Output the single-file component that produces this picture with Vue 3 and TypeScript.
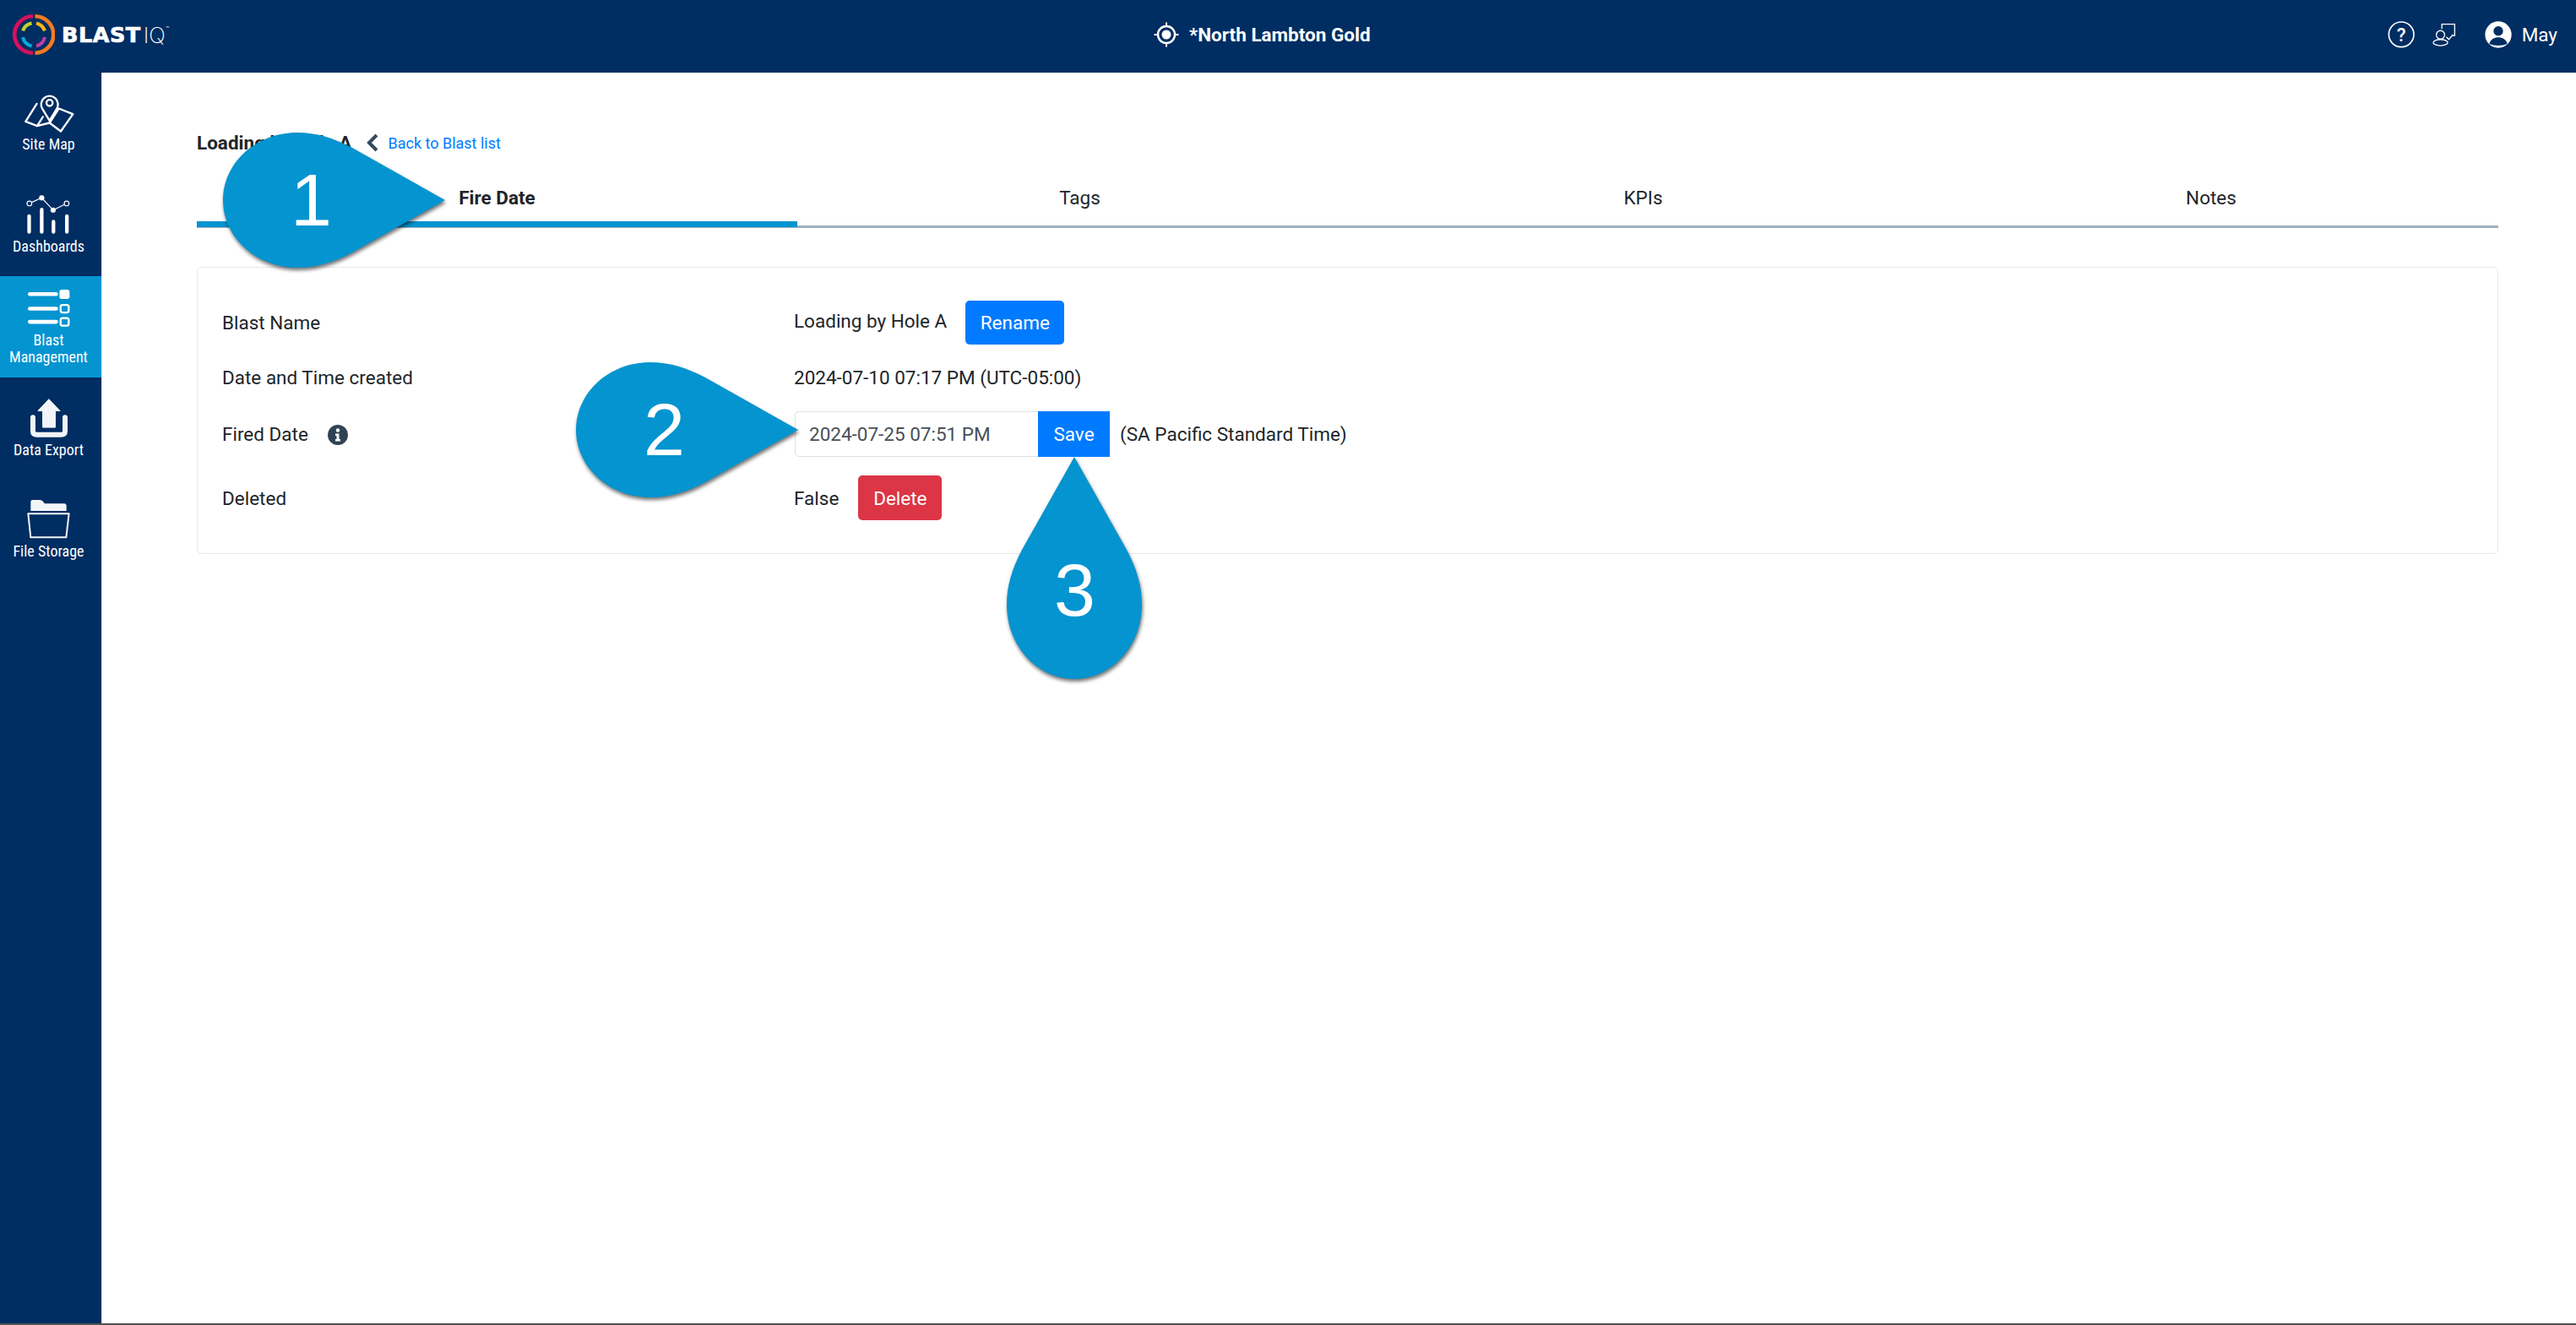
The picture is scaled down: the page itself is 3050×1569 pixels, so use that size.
<script setup lang="ts">
interface NavItem { id: string; lines: string[]; active?: boolean }
const nav: NavItem[] = [
  { id: 'map', lines: ['Site Map'] },
  { id: 'dash', lines: ['Dashboards'] },
  { id: 'blast', lines: ['Blast', 'Management'], active: true },
  { id: 'export', lines: ['Data Export'] },
  { id: 'files', lines: ['File Storage'] },
]
const tabs = ['Fire Date', 'Tags', 'KPIs', 'Notes']
const drops = [
  { n: 1, left: 264, top: 157, rot: 0 },
  { n: 2, left: 682, top: 429, rot: 0 },
  { n: 3, left: 1192, top: 541, rot: -90 },
]
function dropBox(d: { left: number; top: number; rot: number }) {
  return d.rot
    ? { left: d.left + 'px', top: d.top + 'px', width: '160px', height: '263px' }
    : { left: d.left + 'px', top: d.top + 'px', width: '263px', height: '160px' }
}
</script>

<template>
  <div class="page">
    <header class="top">
      <div class="logo">
        <svg class="logo-mark" viewBox="0 0 50 50" width="50" height="50" fill="none">
          <path d="M24 3.2A21.8 21.8 0 0 0 24 46.8" stroke="#d8105f" stroke-width="4.6" />
          <path d="M26.5 3.2A21.8 21.8 0 0 1 26.5 46.8" stroke="#f47b20" stroke-width="4.6" />
          <path d="M12 20.500A13.800 13.800 0 0 1 22.500 11.500" stroke="#c5d029" stroke-width="4" />
          <path d="M28 11.500A13.800 13.800 0 0 1 38 20.500" stroke="#fdb913" stroke-width="4" />
          <path d="M38 28A13.800 13.800 0 0 1 28 38.500" stroke="#b83fa8" stroke-width="4" />
          <path d="M22.500 38.500A13.800 13.800 0 0 1 12 28" stroke="#0fa6d8" stroke-width="4" />
        </svg>
        <span class="logo-blast">BLAST</span><span class="logo-iq">IQ</span><span class="logo-tm">™</span>
      </div>
      <div class="site">
        <svg viewBox="0 0 30 30" width="30" height="30" fill="none" stroke="#fff">
          <circle cx="15" cy="15" r="10" stroke-width="2.400" />
          <circle cx="15" cy="15" r="5.500" fill="#fff" stroke="none" />
          <path d="M15 0.500V5M15 25V29.500M0.500 15H5M25 15H29.500" stroke-width="2" />
        </svg>
        <span>*North Lambton Gold</span>
      </div>
      <div class="tools">
        <svg viewBox="130 70 110 110" width="37" height="37" fill="none" stroke="#fff">
          <circle cx="184" cy="123" r="44" stroke-width="5" />
          <text x="184" y="146" text-anchor="middle" class="q">?</text>
        </svg>
        <svg class="tool-chat" viewBox="290 70 100 100" width="33" height="33" fill="none" stroke="#fff" stroke-width="4">
          <path d="M330 98V81H376V122H366" />
          <circle cx="325" cy="119" r="15" />
          <ellipse cx="325" cy="147" rx="26" ry="11" />
          <path d="M346 127L355 136L370 118" />
        </svg>
        <svg class="tool-user" viewBox="484 72 96 96" width="32" height="32">
          <circle cx="532" cy="120" r="47" fill="#fff" />
          <circle cx="532" cy="107" r="17" fill="#002d62" />
          <path d="M500 153C504 137 518 130 532 130C546 130 560 137 564 153C545 161 519 161 500 153Z" fill="#002d62" />
        </svg>
        <span class="user-name">May</span>
      </div>
    </header>

    <div class="body">
      <aside class="side">
        <div v-for="item in nav" :key="item.id" class="nav" :class="{ on: item.active }">
          <svg v-if="item.id === 'map'" viewBox="80 330 180 140" width="60" height="47" fill="none" stroke="#fff" stroke-width="7" stroke-linejoin="round">
            <path d="M128 366L87 431L128 447L172 436L212 466L255 405L205 385L192 394" />
            <path d="M128 447L150 412M172 436L205 385" />
            <path d="M172 428L147 387A30 30 0 1 1 197 387Z" fill="#002d62" />
            <circle cx="172" cy="365" r="11" />
          </svg>
          <svg v-else-if="item.id === 'dash'" viewBox="90 690 165 145" width="55" height="48" fill="none" stroke="#fff">
            <path d="M103 768V825M148 745V825M190 788V825M238 768V825" stroke-width="13" stroke-linecap="round" />
            <path d="M112 719L148 703L189 747L229 727" stroke-width="3.500" />
            <circle cx="104" cy="723" r="8.500" stroke-width="3.500" />
            <circle cx="148" cy="703" r="9" fill="#fff" />
            <circle cx="189" cy="747" r="9" fill="#fff" />
            <circle cx="237" cy="723" r="8.500" stroke-width="3.500" />
          </svg>
          <svg v-else-if="item.id === 'blast'" viewBox="90 1022 160 143" width="53" height="48" fill="none" stroke="#fff">
            <path d="M103 1043H197M103 1095H197M103 1142H197" stroke-width="14" stroke-linecap="round" />
            <rect x="209" y="1027" width="36" height="33" rx="8" fill="#fff" stroke="none" />
            <rect x="213" y="1082" width="29" height="27" rx="7" stroke-width="7" />
            <rect x="213" y="1129" width="29" height="27" rx="7" stroke-width="7" />
          </svg>
          <svg v-else-if="item.id === 'export'" viewBox="100 92 145 145" width="48" height="48">
            <path d="M172 97L212 139H195V198H150V139H133Z" fill="#f2f5f8" stroke="#f2f5f8" stroke-width="3" stroke-linejoin="round" />
            <path d="M115 162V212Q115 224 130 224H215Q230 224 230 212V162" fill="none" stroke="#f2f5f8" stroke-width="18" stroke-linecap="round" />
          </svg>
          <svg v-else viewBox="92 455 160 145" width="53" height="48" fill="none">
            <path d="M108 497V465Q108 458 116 458H140Q150 458 158 471H228Q236 471 236 481V497Z" fill="#f2f5f8" />
            <path d="M99 507H245L235 592H108Z" stroke="#f2f5f8" stroke-width="6" stroke-linejoin="round" />
          </svg>
          <div class="nav-label">
            <span v-for="l in item.lines" :key="l">{{ l }}</span>
          </div>
        </div>
      </aside>

      <main class="main">
        <div class="crumb">
          <strong>Loading by Hole A</strong>
          <svg viewBox="0 0 14 22" width="14" height="22" fill="none" stroke="#34495e" stroke-width="4">
            <path d="M12 2L3 11L12 20" />
          </svg>
          <a href="#" class="back">Back to Blast list</a>
        </div>

        <nav class="tabs">
          <div v-for="(t, i) in tabs" :key="t" class="tab" :class="{ on: i === 0 }">{{ t }}</div>
        </nav>

        <section class="card">
          <div class="row r1">
            <div class="label">Blast Name</div>
            <div class="value">
              <span class="raised">Loading by Hole A</span>
              <button class="btn blue rename">Rename</button>
            </div>
          </div>
          <div class="row r2">
            <div class="label">Date and Time created</div>
            <div class="value">2024-07-10 07:17 PM (UTC-05:00)</div>
          </div>
          <div class="row r3">
            <div class="label">
              Fired Date
              <svg class="info" viewBox="0 0 24 24" width="24" height="24">
                <circle cx="12" cy="12" r="12" fill="#2f4354" />
                <circle cx="12" cy="6.500" r="2.200" fill="#fff" />
                <path d="M9 10.500H13.500V17H15V19.500H9V17H10.500V13H9Z" fill="#fff" />
              </svg>
            </div>
            <div class="value">
              <input class="date" value="2024-07-25 07:51 PM" readonly />
              <button class="btn blue save">Save</button>
              <span class="zone">(SA Pacific Standard Time)</span>
            </div>
          </div>
          <div class="row r4">
            <div class="label">Deleted</div>
            <div class="value">
              <span>False</span>
              <button class="btn red del">Delete</button>
            </div>
          </div>
        </section>
      </main>
    </div>
    <div class="edge"></div>

    <div v-for="d in drops" :key="d.n" class="drop" :style="dropBox(d)">
      <svg v-if="d.rot === 0" viewBox="0 0 263 160" width="263" height="160">
        <path class="drop-shape" d="M263 80L153 18C130 6 110 0 88 0C39 0 0 36 0 80C0 124 39 160 88 160C110 160 130 154 153 142Z" />
      </svg>
      <svg v-else viewBox="0 0 160 263" width="160" height="263">
        <path class="drop-shape" d="M80 0L18 110C6 133 0 153 0 175C0 224 36 263 80 263C124 263 160 224 160 175C160 153 154 133 142 110Z" />
      </svg>
      <span class="drop-n" :class="'n' + d.n">{{ d.n }}</span>
    </div>
  </div>
</template>

<style scoped>
.page {
  position: relative;
  width: 3050px;
  height: 1569px;
  overflow: hidden;
  background: #fff;
  font-family: Roboto, "Liberation Sans", sans-serif;
  font-size: 22.500px;
  color: #212529;
  display: flex;
  flex-direction: column;
}
.top {
  height: 86px;
  flex: none;
  box-sizing: border-box;
  padding-bottom: 4px;
  background: #002d62;
  color: #fff;
  display: flex;
  align-items: center;
}
.logo {
  width: 1366px;
  padding-left: 15px;
  box-sizing: border-box;
  display: flex;
  align-items: center;
  flex: none;
}
.logo-mark { flex: none; }
.logo-blast {
  margin-left: 8px;
  font-family: "DejaVu Sans", sans-serif;
  font-weight: 700;
  font-size: 25.500px;
  letter-spacing: 0.500px;
  -webkit-text-stroke: 0.7px #fff;
}
.logo-iq {
  margin-left: 3px;
  font-family: Inter, sans-serif;
  font-weight: 200;
  font-size: 26px;
}
.logo-tm {
  font-size: 7px;
  align-self: flex-start;
  margin-top: 14px;
}
.site {
  display: flex;
  align-items: center;
  gap: 12px;
  font-weight: 700;
}
.tools {
  margin-left: auto;
  display: flex;
  align-items: center;
  padding-right: 22px;
}
.q {
  font-family: Roboto, sans-serif;
  font-weight: 500;
  font-size: 66px;
  fill: #fff;
  stroke: none;
}
.tool-chat { margin-left: 16px; }
.tool-user { margin-left: 31px; }
.user-name { margin-left: 12px; }
.body {
  flex: 1;
  display: flex;
  min-height: 0;
}
.side {
  width: 120px;
  flex: none;
  background: #002d62;
  padding-top: 1px;
}
.nav {
  height: 120px;
  box-sizing: border-box;
  padding: 23px 5px 0 0;
  display: flex;
  flex-direction: column;
  align-items: center;
  color: #fff;
}
.nav:nth-child(n + 4) { padding-top: 24px; }
.nav.on {
  background: #0494d0;
  padding-top: 14px;
}
.nav-label {
  margin-top: 4px;
  display: flex;
  flex-direction: column;
  align-items: center;
  font-size: 18px;
  line-height: 20px;
  font-stretch: 85%;
  white-space: nowrap;
}
.main {
  flex: 1;
  padding: 0 92px 0 112px;
  min-width: 0;
  border-left: 1px solid #e3e6ea;
}
.crumb {
  display: flex;
  align-items: center;
  height: 34px;
  margin-top: 66px;
}
.crumb strong { font-weight: 700; }
.crumb svg { margin-left: 18px; }
.back {
  margin-left: 11px;
  color: #007bff;
  font-size: 18px;
  text-decoration: none;
}
.tabs {
  display: grid;
  grid-template-columns: 711px 669px 665px 680px;
  height: 69px;
  margin-top: 15px;
  border-bottom: 3px solid #9fb2bb;
  box-sizing: border-box;
}
.tab {
  display: flex;
  align-items: center;
  justify-content: center;
  position: relative;
}
.tab.on { font-weight: 700; }
.tab.on::after {
  content: "";
  position: absolute;
  left: 0;
  right: 0;
  bottom: -2px;
  height: 7px;
  background: #0494d0;
}
.card {
  margin-top: 46px;
  border: 1px solid #e6e8ea;
  border-radius: 6px;
  padding: 39px 29px 39px 29px;
}
.row {
  display: flex;
  align-items: center;
}
.r1 { height: 52px; }
.r2 { height: 52px; margin-top: 13px; }
.r3 { height: 54px; margin-top: 14px; }
.r4 { height: 53px; margin-top: 22px; }
.label {
  width: 677px;
  flex: none;
  display: flex;
  align-items: center;
}
.raised { margin-top: -4px; }
.info { margin-left: 23px; margin-top: 2px; }
.value {
  display: flex;
  align-items: center;
}
.btn {
  border: none;
  color: #fff;
  font: inherit;
  padding: 0;
  border-radius: 5px;
}
.blue { background: #007bff; }
.red { background: #dc3545; }
.rename { width: 117px; height: 52px; margin-left: 22px; }
.del { width: 99px; height: 53px; margin-left: 23px; }
.date {
  width: 288px;
  height: 54px;
  margin-left: 1px;
  box-sizing: border-box;
  border: 1px solid #dde1e6;
  border-right: none;
  border-radius: 5px 0 0 5px;
  padding: 0 0 0 16px;
  font: inherit;
  color: #495057;
  outline: none;
}
.save { width: 85px; height: 54px; border-radius: 0; }
.zone { margin-left: 12px; }
.edge {
  height: 2px;
  flex: none;
  background: #515151;
}
.drop {
  position: absolute;
}
.drop svg { display: block; overflow: visible; }
.drop-shape {
  fill: #0494d0;
  filter: drop-shadow(1px 3px 2px rgba(0, 0, 0, 0.55));
}
.drop-n {
  position: absolute;
  font-family: "Liberation Sans", sans-serif;
  font-size: 88px;
  line-height: 88px;
  color: #fff;
}
.n1 { left: 80px; top: 36px; }
.n2 { left: 80px; top: 36px; }
.n3 { left: 56px; top: 114px; }
</style>

<style>
html, body { margin: 0; padding: 0; background: #fff; }
</style>
